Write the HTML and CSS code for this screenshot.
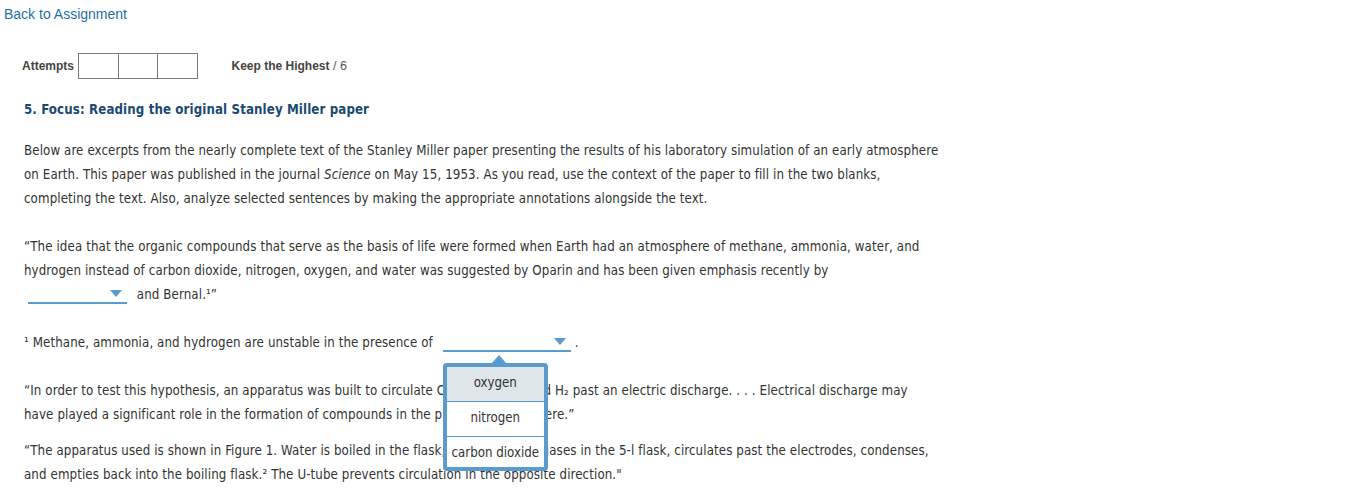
FILE: index.html
```html
<!DOCTYPE html>
<html>

<head>
  <title>Stanley Miller Reading</title>
  <link rel="stylesheet" href="styles.css">
</head>

<body>
  <a href="#" class="back-link">Back to Assignment</a>

  <div class="attempts-bar">
    <span class="attempts-label">Attempts</span>
    <div class="attempt-boxes">
      <div class="attempt-box"></div>
      <div class="attempt-box"></div>
      <div class="attempt-box"></div>
    </div>
    <span class="score-label"><b>Keep the Highest</b> / 6</span>
  </div>

  <div class="question">
    <h2 class="question-title">5. Focus: Reading the original Stanley Miller paper</h2>

    <p class="intro">
      Below are excerpts from the nearly complete text of the Stanley Miller paper presenting the results of his laboratory simulation of an early atmosphere<br>
      on Earth. This paper was published in the journal <i>Science</i> on May 15, 1953. As you read, use the context of the paper to fill in the two blanks,<br>
      completing the text. Also, analyze selected sentences by making the appropriate annotations alongside the text.
    </p>

    <p class="quote">
      “The idea that the organic compounds that serve as the basis of life were formed when Earth had an atmosphere of methane, ammonia, water, and<br>
      hydrogen instead of carbon dioxide, nitrogen, oxygen, and water was suggested by Oparin and has been given emphasis recently by<br>
      <span class="blank blank-short"><span class="caret"></span></span> and Bernal.¹”
    </p>

    <p class="footnote">
      ¹ Methane, ammonia, and hydrogen are unstable in the presence of
      <span class="blank blank-long">
        <span class="caret"></span>
        <span class="choice-menu">
          <span class="choice selected">oxygen</span>
          <span class="choice">nitrogen</span>
          <span class="choice">carbon dioxide</span>
        </span>
      </span> .
    </p>

    <p class="quote tight">
      “In order to test this hypothesis, an apparatus was built to circulate CH₄, NH₃, H₂O, and H₂ past an electric discharge. . . . Electrical discharge may<br>
      have played a significant role in the formation of compounds in the primitive atmosphere.”
    </p>

    <p class="quote">
      “The apparatus used is shown in Figure 1. Water is boiled in the flask, mixes with the gases in the 5-l flask, circulates past the electrodes, condenses,<br>
      and empties back into the boiling flask.² The U-tube prevents circulation in the opposite direction."
    </p>
  </div>
</body>

</html>
```

FILE: styles.css
```css
body {
  margin: 0;
  padding: 0;
  background-color: #ffffff;
  font-family: "Liberation Sans", Arial, sans-serif;
  color: #333333;
}

.back-link {
  display: block;
  padding: 6px 0 0 4px;
  height: 18px;
  font-size: 14px;
  color: #1f6ea6;
  text-decoration: none;
}

.attempts-bar {
  display: flex;
  align-items: center;
  margin-top: 29px;
  padding-left: 22px;
  font-size: 12px;
  color: #444444;
}

.attempts-label {
  font-weight: bold;
  margin-right: 4px;
}

.attempt-boxes {
  display: flex;
}

.attempt-box {
  width: 38.5px;
  height: 24px;
  border: 1px solid #7a7a7a;
  margin-left: -1px;
}

.attempt-box:first-child {
  margin-left: 0;
}

.score-label {
  margin-left: 34px;
  font-size: 12.5px;
  color: #555555;
}

.score-label b {
  font-size: 12px;
  color: #444444;
}

.question {
  padding-left: 24px;
  font-family: "DejaVu Sans Condensed", "DejaVu Sans", Verdana, sans-serif;
  font-size: 13.2px;
  letter-spacing: 0.1px;
  color: #333333;
}

.question-title {
  margin: 23px 0 0 0;
  font-size: 13.2px;
  line-height: 16px;
  font-weight: bold;
  color: #1b4a73;
}

.intro,
.quote,
.footnote {
  margin: 0;
  line-height: 24px;
}

.intro {
  margin-top: 21px;
}

.quote {
  margin-top: 24px;
}

.footnote {
  margin-top: 24px;
}

.quote.tight {
  margin-top: 24px;
}

.quote.tight + .quote {
  margin-top: 12px;
}

.blank {
  display: inline-block;
  position: relative;
  height: 18px;
  vertical-align: -5px;
  border-bottom: 2px solid #5b9acd;
}

.blank-short {
  width: 99px;
  margin: 0 6px 0 4px;
}

.blank-long {
  width: 128px;
  margin-left: 6px;
}

.caret {
  position: absolute;
  right: 5px;
  top: 6px;
  width: 0;
  height: 0;
  border-left: 6px solid transparent;
  border-right: 6px solid transparent;
  border-top: 7px solid #5b9acd;
}

.choice-menu {
  position: absolute;
  top: 31px;
  left: 0;
  width: 97px;
  display: flex;
  flex-direction: column;
  background-color: #ffffff;
  border: 4px solid #5b9acd;
  border-radius: 4px;
  line-height: 20px;
  letter-spacing: 0;
  z-index: 5;
}

.choice-menu::before {
  content: "";
  position: absolute;
  top: -12px;
  left: 45px;
  border-left: 7px solid transparent;
  border-right: 7px solid transparent;
  border-bottom: 8px solid #5b9acd;
}

.choice {
  display: block;
  text-align: center;
  padding: 6px 0 8px 0;
  border-top: 1px solid #5b9acd;
  color: #333333;
  white-space: nowrap;
}

.choice:first-child {
  border-top: none;
}

.choice.selected {
  background-color: #dfe6ea;
}

.choice:last-child {
  padding: 6px 0 4px 0;
}
```
